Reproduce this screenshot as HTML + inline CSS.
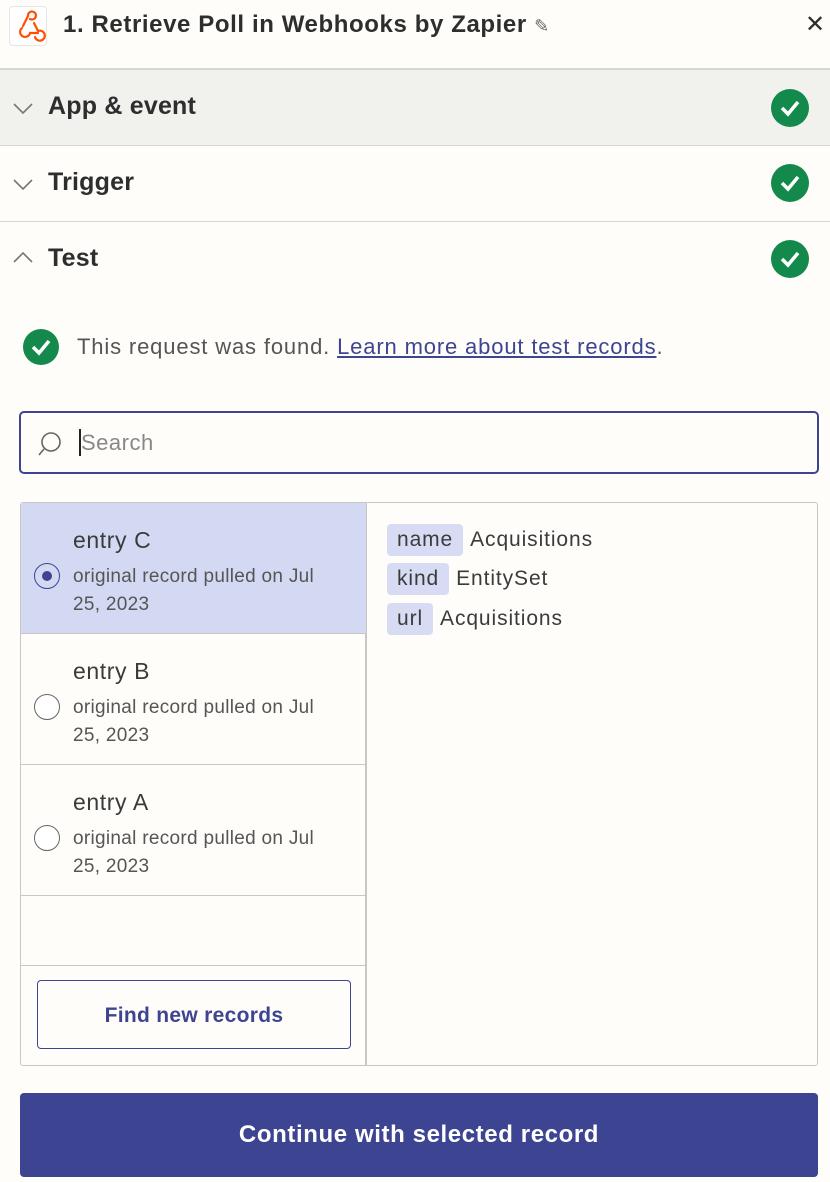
<!DOCTYPE html>
<html><head><style>
*{box-sizing:border-box;margin:0;padding:0}
body{width:830px;height:1182px;background:#fffdf9;font-family:"Liberation Sans",sans-serif;color:#2d2e2e;position:relative;overflow:hidden}
.a{position:absolute}
.hdr{font-size:24px;font-weight:bold;color:#2d2e2e;letter-spacing:0.6px}
.sec{left:0;width:830px;height:76px;border-bottom:1.5px solid #d7d5d1}
.sec .t,.tt{position:absolute;left:48px;top:22px;font-size:25px;font-weight:bold;color:#2d2e2e;letter-spacing:0.2px}
.chk{position:absolute;width:38px;height:38px;border-radius:50%;background:#138a4c}
.chk svg{position:absolute;left:0;top:0}
.row{left:21px;width:345px;border-bottom:1.5px solid #c9c7c3}
.row .e{position:absolute;left:52px;top:24px;font-size:23px;color:#3a3b3b;letter-spacing:0.6px}
.row .s{position:absolute;left:52px;top:60px;font-size:19px;color:#555;line-height:28px;width:268px;letter-spacing:0.3px}
.rad{position:absolute;left:13px;top:60px;width:26px;height:26px;border-radius:50%;border:1.5px solid #666;background:#fff}
.tag{position:absolute;left:387px;height:32px;font-size:21px;line-height:32px;color:#3a3b3b;letter-spacing:0.9px}
.tag b{font-weight:normal;background:#d7dcf4;border-radius:4px;padding:0 10px;display:inline-block;margin-right:7px}
</style></head><body>
<div class="a" style="left:9px;top:6px;width:38px;height:40px;border:1px solid #e8e6e2;border-radius:4px;background:#fff">
<svg width="38" height="40" viewBox="0 0 38 40"><path d="M18 9 L13 19 M20 12 a4 4 0 1 0 -2 -3 M12 21 a5 5 0 1 0 8 5 h8 M24 16 l4 8 a5 5 0 1 1 -3 6" stroke="#ff4f00" stroke-width="2.2" fill="none" stroke-linecap="round"/></svg></div>
<div class="a hdr" style="left:63px;top:11px">1. Retrieve Poll in Webhooks by Zapier <span style="font-weight:normal;font-size:18px;color:#666">✎</span></div>
<div class="a" style="left:805px;top:10px;font-size:24px;color:#2d2e2e">✕</div>
<div class="a" style="left:0;top:68px;width:830px;height:1.5px;background:#d7d5d1"></div>
<div class="a sec" style="top:70px;background:#f1f1ee"><svg class="a" style="left:12px;top:32px" width="22" height="14"><path d="M2 2 L11 11 L20 2" stroke="#777" stroke-width="1.6" fill="none"/></svg><div class="t">App &amp; event</div><div class="chk" style="left:771px;top:19px"><svg width="38" height="38"><path d="M11 19 L17 25 L27 13" stroke="#fff" stroke-width="3.5" fill="none"/></svg></div></div>
<div class="a sec" style="top:146px"><svg class="a" style="left:12px;top:32px" width="22" height="14"><path d="M2 2 L11 11 L20 2" stroke="#777" stroke-width="1.6" fill="none"/></svg><div class="t">Trigger</div><div class="chk" style="left:771px;top:18px"><svg width="38" height="38"><path d="M11 19 L17 25 L27 13" stroke="#fff" stroke-width="3.5" fill="none"/></svg></div></div>
<div class="a" style="left:0;top:222px;width:830px;height:76px"><svg class="a" style="left:12px;top:28px" width="22" height="14"><path d="M2 12 L11 3 L20 12" stroke="#777" stroke-width="1.6" fill="none"/></svg><div class="tt">Test</div><div class="chk" style="left:771px;top:18px"><svg width="38" height="38"><path d="M11 19 L17 25 L27 13" stroke="#fff" stroke-width="3.5" fill="none"/></svg></div></div>
<div class="chk" style="left:23px;top:329px;width:36px;height:36px"><svg width="36" height="36"><path d="M10 18 L16 24 L26 12" stroke="#fff" stroke-width="3.5" fill="none"/></svg></div>
<div class="a" style="left:77px;top:334px;font-size:22px;color:#555;letter-spacing:0.85px">This request was found. <span style="color:#3d4592;text-decoration:underline">Learn more about test records</span>.</div>
<div class="a" style="left:19px;top:411px;width:800px;height:63px;border:2px solid #3d4592;border-radius:5px;background:#fffdf9"></div>
<svg class="a" style="left:36px;top:430px" width="30" height="28"><circle cx="15" cy="12" r="9" stroke="#666" stroke-width="1.6" fill="none"/><path d="M8 19 L3 25" stroke="#666" stroke-width="1.6"/></svg>
<div class="a" style="left:79px;top:429px;width:1.5px;height:27px;background:#222"></div>
<div class="a" style="left:81px;top:430px;font-size:22px;color:#888;letter-spacing:0.5px">Search</div>
<div class="a" style="left:20px;top:502px;width:798px;height:564px;border:1.5px solid #c9c7c3;border-radius:3px"></div>
<div class="a" style="left:365px;top:503px;width:1.5px;height:562px;background:#c9c7c3"></div>
<div class="a row" style="top:503px;height:131px;background:#d3d9f3"><div class="rad" style="border-color:#3d4592;background:transparent"><div class="a" style="left:7px;top:7px;width:10px;height:10px;border-radius:50%;background:#3d4592"></div></div><div class="e">entry C</div><div class="s">original record pulled on Jul 25, 2023</div></div>
<div class="a row" style="top:634px;height:131px"><div class="rad"></div><div class="e">entry B</div><div class="s">original record pulled on Jul 25, 2023</div></div>
<div class="a row" style="top:765px;height:131px"><div class="rad"></div><div class="e">entry A</div><div class="s">original record pulled on Jul 25, 2023</div></div>
<div class="a row" style="top:896px;height:70px"></div>
<div class="a" style="left:37px;top:980px;width:314px;height:69px;border:1.5px solid #3d4592;border-radius:4px;text-align:center;line-height:69px;font-size:21px;font-weight:bold;color:#3d4592;letter-spacing:0.3px">Find new records</div>
<div class="tag" style="top:524px"><b>name</b>Acquisitions</div>
<div class="tag" style="top:563px"><b>kind</b>EntitySet</div>
<div class="tag" style="top:603px"><b>url</b>Acquisitions</div>
<div class="a" style="left:20px;top:1093px;width:798px;height:84px;background:#3d4592;border-radius:4px;color:#fff;font-size:24px;font-weight:bold;text-align:center;line-height:84px;letter-spacing:0.6px">Continue with selected record</div>
</body></html>
